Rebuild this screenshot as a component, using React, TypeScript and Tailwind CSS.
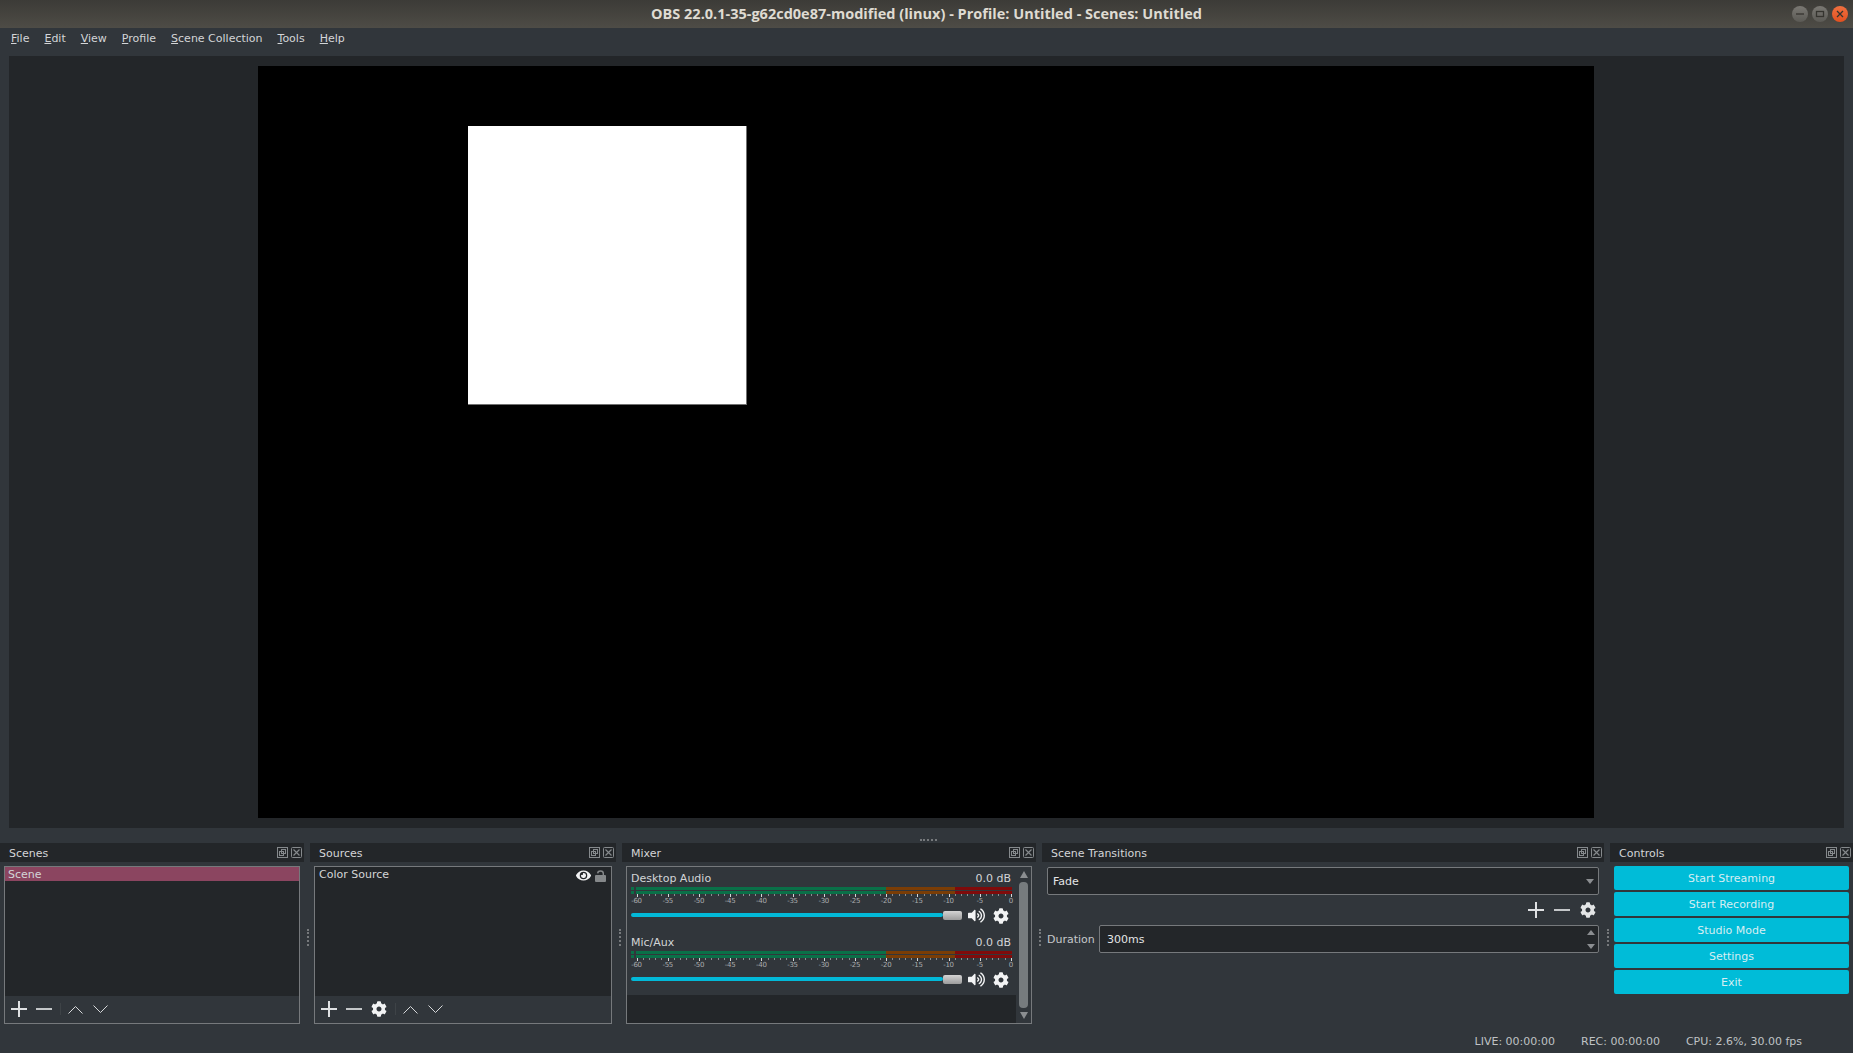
import { FaCog, FaEye, FaVolumeUp } from 'react-icons/fa';

const menus = [
  ['F', 'ile'],
  ['E', 'dit'],
  ['V', 'iew'],
  ['P', 'rofile'],
  ['S', 'cene Collection'],
  ['T', 'ools'],
  ['H', 'elp'],
];
const scale = [-60, -55, -50, -45, -40, -35, -30, -25, -20, -15, -10, -5, 0];
const controls = ['Start Streaming', 'Start Recording', 'Studio Mode', 'Settings', 'Exit'];

function DockButtons() {
  return (
    <div className="flex items-center gap-[3px]">
      <svg width="11" height="11" viewBox="0 0 11 11" fill="none" stroke="#85898c" shapeRendering="crispEdges">
        <rect x="0.5" y="0.5" width="10" height="10" rx="1" />
        <rect x="4.5" y="2.5" width="4" height="4" />
        <rect x="2.5" y="4.5" width="4" height="4" />
      </svg>
      <svg width="11" height="11" viewBox="0 0 11 11" fill="none" stroke="#85898c">
        <rect x="0.5" y="0.5" width="10" height="10" rx="1" />
        <path d="M2.5 2.5l6 6M8.5 2.5l-6 6" strokeWidth="1.2" />
      </svg>
    </div>
  );
}

function Dock({ title, width, pad = 'px-1', children }: { title: string; width: string; pad?: string; children: React.ReactNode }) {
  return (
    <div className={`flex flex-col shrink-0 ${width}`}>
      <div className="h-[19px] bg-[#232629] flex items-center justify-between pl-[9px] pr-[2px] text-[#d3d5d7]">
        <span className="pt-px">{title}</span>
        <DockButtons />
      </div>
      <div className={`h-[158px] mt-1 ${pad}`}>{children}</div>
    </div>
  );
}

function Splitter() {
  return (
    <div className="w-[6px] shrink-0 flex items-center justify-end pr-px">
      <div className="h-[17px] border-l-2 border-dotted border-[#76797c]" />
    </div>
  );
}

function Plus() {
  return (
    <svg width="16" height="16" viewBox="0 0 16 16" stroke="#dfe1e3" shapeRendering="crispEdges">
      <path d="M0 8h16M8 0v16" strokeWidth="1.3" />
    </svg>
  );
}

function Minus() {
  return (
    <svg width="16" height="16" viewBox="0 0 16 16" stroke="#c4c7c9" shapeRendering="crispEdges">
      <path d="M0 8h16" strokeWidth="1.3" />
    </svg>
  );
}

function Chevron({ up }: { up?: boolean }) {
  return (
    <svg width="15" height="9" viewBox="0 0 15 9" fill="none" stroke="#d6d8da" strokeWidth="1">
      <path d={up ? 'M0.5 8.5L7.5 1.5L14.5 8.5' : 'M0.5 0.5L7.5 7.5L14.5 0.5'} />
    </svg>
  );
}

function Arrow({ up, tall, color = '#8b8e91' }: { up?: boolean; tall?: boolean; color?: string }) {
  const h = tall ? 7 : 5;
  return (
    <svg width="8" height={h} viewBox={`0 0 8 ${h}`} fill={color}>
      <path d={up ? `M4 0L8 ${h}H0z` : `M0 0H8L4 ${h}z`} />
    </svg>
  );
}

function ListToolbar({ gear }: { gear?: boolean }) {
  return (
    <div className="h-[27px] flex items-center pl-[6px] pb-px">
      <Plus />
      <div className="ml-[9px]"><Minus /></div>
      {gear && <FaCog className="ml-[9px] text-[#f2f3f4]" size={16} />}
      <div className="ml-[8px] w-px h-3 bg-[#3e4347]" />
      <div className="ml-[7px]"><Chevron up /></div>
      <div className="ml-[10px]"><Chevron /></div>
    </div>
  );
}

function MeterRow() {
  return (
    <div className="flex h-[3px]">
      <div className="w-[3px] bg-[#0a7048]" />
      <div className="w-[250px] ml-[2px] bg-[#0a7048]" />
      <div className="w-[69px] bg-[#7a3d06]" />
      <div className="w-[57px] bg-[#7f0b0b]" />
    </div>
  );
}

function Ticks() {
  const minor = Array.from({ length: 61 }, (_, i) => 5.5 + i * 6.24);
  return (
    <svg width="384" height="12" className="block">
      {minor.map((x, i) => (
        <rect key={i} x={Math.round(x)} y="0" width="1" height={i % 5 === 0 ? 3 : 2} fill={i % 5 === 0 ? '#d5d7d9' : '#8b8e91'} />
      ))}
      {scale.map((v, i) => (
        <text key={v} x={5.5 + i * 31.2} y="9" textAnchor="middle" fontSize="7" letterSpacing="-0.3" fill="#a9acae">
          {v}
        </text>
      ))}
    </svg>
  );
}

function Channel({ name }: { name: string }) {
  return (
    <div className="h-[64px] pl-1 pt-1">
      <div className="h-[14px] flex items-center justify-between pr-[5px] text-[#d3d5d7]">
        <span>{name}</span>
        <span>0.0 dB</span>
      </div>
      <div className="mt-[2px] flex flex-col gap-px w-[381px]">
        <MeterRow />
        <MeterRow />
      </div>
      <Ticks />
      <div className="h-[18px] flex items-center">
        <div className="w-[312px] h-1 rounded-full bg-[#02b9d8]" />
        <div className="w-[19px] h-[9px] rounded-[2px] bg-gradient-to-b from-[#d4d4d4] to-[#9c9c9c]" />
        <FaVolumeUp className="ml-[6px] text-[#f2f3f4]" size={17} />
        <FaCog className="ml-[8px] mt-px text-[#f2f3f4]" size={16} />
      </div>
    </div>
  );
}

function WindowButton({ kind }: { kind: 'min' | 'max' | 'close' }) {
  const bg = kind === 'close' ? 'from-[#f0703f] to-[#e2501f]' : 'from-[#7a7873] to-[#5b5a55]';
  return (
    <div className={`w-4 h-4 rounded-full bg-gradient-to-b ${bg} flex items-center justify-center`}>
      <svg width="10" height="10" viewBox="0 0 10 10" fill="none" stroke="#35342f" strokeWidth="1.3">
        {kind === 'min' && <path d="M1 5h8" />}
        {kind === 'max' && <rect x="1.5" y="2.5" width="7" height="5" />}
        {kind === 'close' && <path d="M2 2l6 6M8 2l-6 6" />}
      </svg>
    </div>
  );
}

export default function App() {
  return (
    <div className="w-[1853px] h-[1053px] overflow-hidden flex flex-col bg-[#31363b] text-[11px] text-[#d3d5d7] font-['DejaVu_Sans',sans-serif] leading-none">
      <div className="h-7 shrink-0 relative flex items-center justify-center bg-gradient-to-b from-[#3c3b37] to-[#4e4c46]">
        <span className="text-[14.5px] font-bold text-[#dfdbd2] font-['Open_Sans',sans-serif]">
          OBS 22.0.1-35-g62cd0e87-modified (linux) - Profile: Untitled - Scenes: Untitled
        </span>
        <div className="absolute right-[5px] top-[6px] flex gap-1">
          <WindowButton kind="min" />
          <WindowButton kind="max" />
          <WindowButton kind="close" />
        </div>
      </div>

      <div className="h-7 shrink-0 flex items-center pl-[3.5px] pb-[7px]">
        {menus.map(([key, rest]) => (
          <div key={key} className="px-[7.5px]">
            <u>{key}</u>
            {rest}
          </div>
        ))}
      </div>

      <div className="h-[772px] shrink-0 mx-[9px] pl-[249px] bg-[#232629] flex items-center">
        <div className="w-[1336px] h-[752px] bg-black relative">
          <div className="absolute left-[210px] top-[60px] w-[279px] h-[279px] bg-white border-r border-b border-[#707070]" />
        </div>
      </div>

      <div className="h-[15px] shrink-0 flex items-end justify-center pb-[2px]">
        <div className="ml-[4px] w-[17px] border-t-2 border-dotted border-[#76797c]" />
      </div>

      <div className="h-[189px] shrink-0 flex">
        <Dock title="Scenes" width="w-[304px]">
          <div className="h-full border border-[#76797c] flex flex-col">
            <div className="flex-1 bg-[#232629]">
              <div className="h-[14px] bg-[#8b4560] flex items-center pl-[3px]">Scene</div>
            </div>
            <ListToolbar />
          </div>
        </Dock>
        <Splitter />
        <Dock title="Sources" width="w-[306px]">
          <div className="h-full border border-[#76797c] flex flex-col">
            <div className="flex-1 bg-[#232629]">
              <div className="h-[14px] flex items-center justify-between pl-1 pr-[5px]">
                <span>Color Source</span>
                <div className="flex items-center gap-[4px] pt-[3px]">
                  <FaEye className="text-[#f2f3f4]" size={15} />
                  <svg width="11" height="12" viewBox="0 0 11 12" fill="#85888a">
                    <rect x="0" y="5" width="11" height="7" rx="1" />
                    <path d="M2 3.2a3.5 3 0 0 1 7 0V5H7.6V3.5a2.1 1.8 0 0 0-4.2 0z" />
                  </svg>
                </div>
              </div>
            </div>
            <ListToolbar gear />
          </div>
        </Dock>
        <Splitter />
        <Dock title="Mixer" width="w-[414px]">
          <div className="h-full border border-[#76797c] flex">
            <div className="flex-1 min-w-0 flex flex-col">
              <Channel name="Desktop Audio" />
              <Channel name="Mic/Aux" />
              <div className="flex-1 bg-[#232629]" />
            </div>
            <div className="w-[15px] shrink-0 flex flex-col items-center pt-1">
              <Arrow up tall />
              <div className="mt-[4px] w-[9px] h-[126px] rounded-[4px] bg-[#767b7e]" />
              <div className="mt-[4px]"><Arrow tall /></div>
            </div>
          </div>
        </Dock>
        <Splitter />
        <Dock title="Scene Transitions" width="w-[562px]" pad="pl-[5px] pr-[5px]">
          <div className="mt-px h-[28px] rounded-[2px] border border-[#76797c] bg-[#232629] flex items-center justify-between pl-[5px] pr-[4px] text-[#e4e5e6]">
            <span>Fade</span>
            <Arrow />
          </div>
          <div className="h-[30px] flex items-center justify-end gap-[10px] pr-[3px]">
            <Plus />
            <Minus />
            <FaCog className="text-[#e3e5e6]" size={16} />
          </div>
          <div className="flex items-center">
            <span className="w-[52px] text-[#c6c8ca]">Duration</span>
            <div className="flex-1 h-[28px] rounded-[2px] border border-[#76797c] bg-[#232629] flex items-center justify-between pl-[7px] pr-[3px] text-[#e4e5e6]">
              <span>300ms</span>
              <div className="flex flex-col gap-[9px]">
                <Arrow up />
                <Arrow />
              </div>
            </div>
          </div>
        </Dock>
        <Splitter />
        <Dock title="Controls" width="w-[243px]">
          <div className="flex flex-col gap-[2px]">
            {controls.map((label) => (
              <div key={label} className="h-6 rounded-[2px] bg-[#00bcd8] flex items-center justify-center text-[#d6eef3]">
                {label}
              </div>
            ))}
          </div>
        </Dock>
      </div>

      <div className="flex-1 flex items-center justify-end pr-[51px] pb-[2px] text-[#bfc2c4]">
        <span>LIVE: 00:00:00</span>
        <span className="ml-[26px]">REC: 00:00:00</span>
        <span className="ml-[26px]">CPU: 2.6%, 30.00 fps</span>
      </div>
    </div>
  );
}
